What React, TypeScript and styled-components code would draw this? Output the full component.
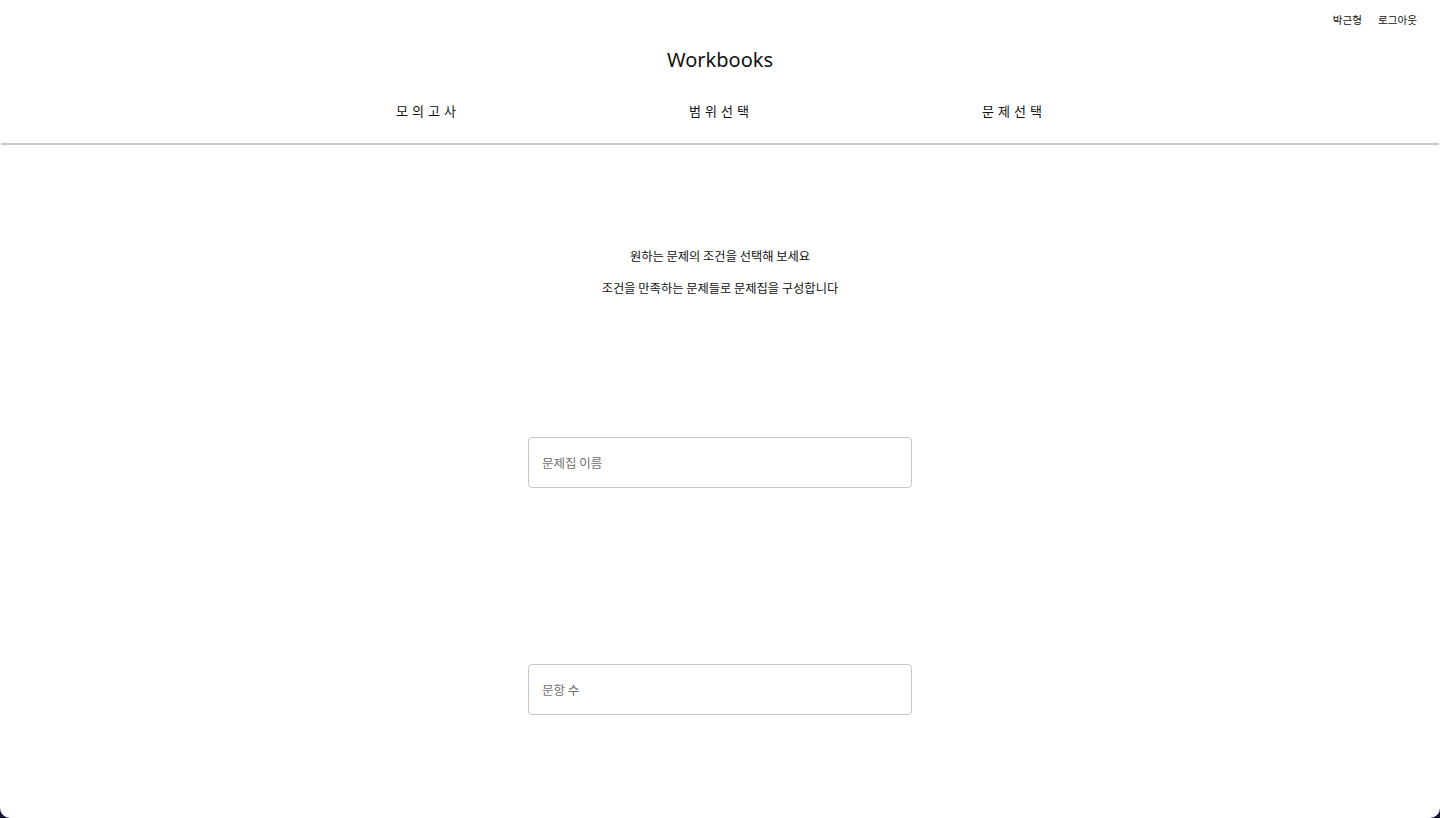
import React from "react";
import styled, { createGlobalStyle } from "styled-components";

const GlobalStyle = createGlobalStyle`
  html { background: #15172a; }
  body {
    margin: 0;
    font-family: "Noto Sans CJK KR", "Noto Sans", sans-serif;
    color: #111;
  }
  * { box-sizing: border-box; }
`;

const Page = styled.div`
  min-height: 100vh;
  background: #fff;
  border-radius: 0 0 10px 10px;
  overflow: hidden;
`;

const Header = styled.header`
  display: flex;
  flex-direction: column;
  border-bottom: 2px solid #c9c9c9;
  margin: 0 1px;
`;

const UserBar = styled.div`
  display: flex;
  justify-content: flex-end;
  gap: 16px;
  padding: 13px 22px 0;
  font-size: 10.6px;
  line-height: 14px;
`;

const UserLink = styled.a`
  color: #111;
  text-decoration: none;
  cursor: pointer;
`;

const Title = styled.h1`
  margin: 18px 0 0;
  text-align: center;
  font-family: "Noto Sans", sans-serif;
  font-weight: 400;
  font-size: 20px;
  line-height: 30px;
  letter-spacing: 0;
`;

const Nav = styled.nav`
  display: flex;
  width: 879px;
  margin: 26px auto 0;
  padding-bottom: 22px;
  align-self: center;
  transform: translateX(1px);
`;

const NavItem = styled.a`
  flex: 1;
  text-align: center;
  font-size: 13px;
  line-height: 20px;
  letter-spacing: 4px;
  color: #111;
  cursor: pointer;
`;

const Main = styled.main`
  display: flex;
  flex-direction: column;
  align-items: center;
  padding-top: 95px;
`;

const Lead = styled.p`
  margin: 0;
  font-size: 12.25px;
  line-height: 32px;
  text-align: center;
`;

const Field = styled.input<{ $gap: number }>`
  width: 384px;
  height: 51px;
  margin-top: ${(p) => p.$gap}px;
  padding: 0 13px;
  border: 1px solid #c6c6c6;
  border-radius: 4px;
  font-family: inherit;
  font-size: 12.5px;
  color: #111;
  outline: none;
  &::placeholder { color: #6f6f6f; }
`;

export default function App() {
  return (
    <Page>
      <GlobalStyle />
      <Header>
        <UserBar>
          <UserLink>박근형</UserLink>
          <UserLink>로그아웃</UserLink>
        </UserBar>
        <Title>Workbooks</Title>
        <Nav>
          <NavItem>모의고사</NavItem>
          <NavItem>범위선택</NavItem>
          <NavItem>문제선택</NavItem>
        </Nav>
      </Header>
      <Main>
        <Lead>원하는 문제의 조건을 선택해 보세요</Lead>
        <Lead>조건을 만족하는 문제들로 문제집을 구성합니다</Lead>
        <Field $gap={133} placeholder="문제집 이름" />
        <Field $gap={176} placeholder="문항 수" />
      </Main>
    </Page>
  );
}
